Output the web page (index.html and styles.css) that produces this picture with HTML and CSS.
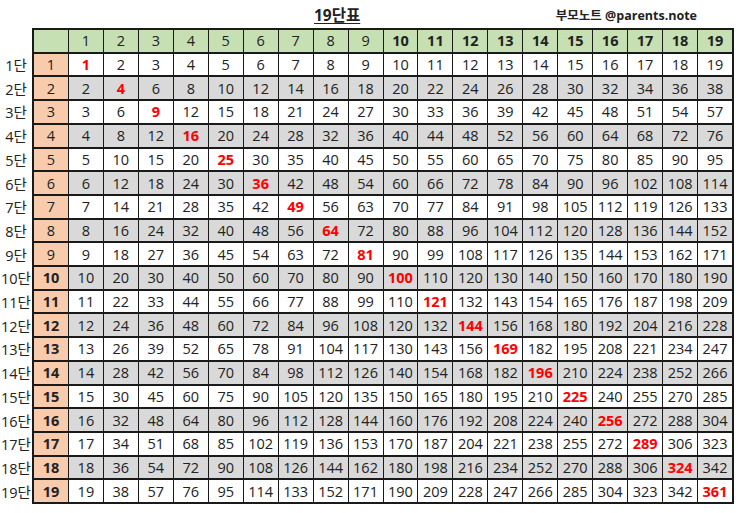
FILE: index.html
```html
<!DOCTYPE html>
<html lang="ko">
<head>
<meta charset="utf-8">
<title>19단표</title>
<link rel="stylesheet" href="styles.css">
</head>
<body>
<div class="top">
  <div class="title">19단표</div>
  <div class="credit">부모노트 @parents.note</div>
</div>
<div class="sheet">
  <div class="labels">
    <span></span>
    <span>1단</span><span>2단</span><span>3단</span><span>4단</span><span>5단</span><span>6단</span><span>7단</span><span>8단</span><span>9단</span><span>10단</span>
    <span>11단</span><span>12단</span><span>13단</span><span>14단</span><span>15단</span><span>16단</span><span>17단</span><span>18단</span><span>19단</span>
  </div>
  <div class="grid">
    <div class="r hd"><span></span><span>1</span><span>2</span><span>3</span><span>4</span><span>5</span><span>6</span><span>7</span><span>8</span><span>9</span><span class="b">10</span><span class="b">11</span><span class="b">12</span><span class="b">13</span><span class="b">14</span><span class="b">15</span><span class="b">16</span><span class="b">17</span><span class="b">18</span><span class="b">19</span></div>
    <div class="r"><span class="o">1</span><span class="d">1</span><span>2</span><span>3</span><span>4</span><span>5</span><span>6</span><span>7</span><span>8</span><span>9</span><span>10</span><span>11</span><span>12</span><span>13</span><span>14</span><span>15</span><span>16</span><span>17</span><span>18</span><span>19</span></div>
    <div class="r g"><span class="o">2</span><span>2</span><span class="d">4</span><span>6</span><span>8</span><span>10</span><span>12</span><span>14</span><span>16</span><span>18</span><span>20</span><span>22</span><span>24</span><span>26</span><span>28</span><span>30</span><span>32</span><span>34</span><span>36</span><span>38</span></div>
    <div class="r"><span class="o">3</span><span>3</span><span>6</span><span class="d">9</span><span>12</span><span>15</span><span>18</span><span>21</span><span>24</span><span>27</span><span>30</span><span>33</span><span>36</span><span>39</span><span>42</span><span>45</span><span>48</span><span>51</span><span>54</span><span>57</span></div>
    <div class="r g"><span class="o">4</span><span>4</span><span>8</span><span>12</span><span class="d">16</span><span>20</span><span>24</span><span>28</span><span>32</span><span>36</span><span>40</span><span>44</span><span>48</span><span>52</span><span>56</span><span>60</span><span>64</span><span>68</span><span>72</span><span>76</span></div>
    <div class="r"><span class="o">5</span><span>5</span><span>10</span><span>15</span><span>20</span><span class="d">25</span><span>30</span><span>35</span><span>40</span><span>45</span><span>50</span><span>55</span><span>60</span><span>65</span><span>70</span><span>75</span><span>80</span><span>85</span><span>90</span><span>95</span></div>
    <div class="r g"><span class="o">6</span><span>6</span><span>12</span><span>18</span><span>24</span><span>30</span><span class="d">36</span><span>42</span><span>48</span><span>54</span><span>60</span><span>66</span><span>72</span><span>78</span><span>84</span><span>90</span><span>96</span><span>102</span><span>108</span><span>114</span></div>
    <div class="r"><span class="o">7</span><span>7</span><span>14</span><span>21</span><span>28</span><span>35</span><span>42</span><span class="d">49</span><span>56</span><span>63</span><span>70</span><span>77</span><span>84</span><span>91</span><span>98</span><span>105</span><span>112</span><span>119</span><span>126</span><span>133</span></div>
    <div class="r g"><span class="o">8</span><span>8</span><span>16</span><span>24</span><span>32</span><span>40</span><span>48</span><span>56</span><span class="d">64</span><span>72</span><span>80</span><span>88</span><span>96</span><span>104</span><span>112</span><span>120</span><span>128</span><span>136</span><span>144</span><span>152</span></div>
    <div class="r"><span class="o">9</span><span>9</span><span>18</span><span>27</span><span>36</span><span>45</span><span>54</span><span>63</span><span>72</span><span class="d">81</span><span>90</span><span>99</span><span>108</span><span>117</span><span>126</span><span>135</span><span>144</span><span>153</span><span>162</span><span>171</span></div>
    <div class="r g"><span class="o b">10</span><span>10</span><span>20</span><span>30</span><span>40</span><span>50</span><span>60</span><span>70</span><span>80</span><span>90</span><span class="d">100</span><span>110</span><span>120</span><span>130</span><span>140</span><span>150</span><span>160</span><span>170</span><span>180</span><span>190</span></div>
    <div class="r"><span class="o b">11</span><span>11</span><span>22</span><span>33</span><span>44</span><span>55</span><span>66</span><span>77</span><span>88</span><span>99</span><span>110</span><span class="d">121</span><span>132</span><span>143</span><span>154</span><span>165</span><span>176</span><span>187</span><span>198</span><span>209</span></div>
    <div class="r g"><span class="o b">12</span><span>12</span><span>24</span><span>36</span><span>48</span><span>60</span><span>72</span><span>84</span><span>96</span><span>108</span><span>120</span><span>132</span><span class="d">144</span><span>156</span><span>168</span><span>180</span><span>192</span><span>204</span><span>216</span><span>228</span></div>
    <div class="r"><span class="o b">13</span><span>13</span><span>26</span><span>39</span><span>52</span><span>65</span><span>78</span><span>91</span><span>104</span><span>117</span><span>130</span><span>143</span><span>156</span><span class="d">169</span><span>182</span><span>195</span><span>208</span><span>221</span><span>234</span><span>247</span></div>
    <div class="r g"><span class="o b">14</span><span>14</span><span>28</span><span>42</span><span>56</span><span>70</span><span>84</span><span>98</span><span>112</span><span>126</span><span>140</span><span>154</span><span>168</span><span>182</span><span class="d">196</span><span>210</span><span>224</span><span>238</span><span>252</span><span>266</span></div>
    <div class="r"><span class="o b">15</span><span>15</span><span>30</span><span>45</span><span>60</span><span>75</span><span>90</span><span>105</span><span>120</span><span>135</span><span>150</span><span>165</span><span>180</span><span>195</span><span>210</span><span class="d">225</span><span>240</span><span>255</span><span>270</span><span>285</span></div>
    <div class="r g"><span class="o b">16</span><span>16</span><span>32</span><span>48</span><span>64</span><span>80</span><span>96</span><span>112</span><span>128</span><span>144</span><span>160</span><span>176</span><span>192</span><span>208</span><span>224</span><span>240</span><span class="d">256</span><span>272</span><span>288</span><span>304</span></div>
    <div class="r"><span class="o b">17</span><span>17</span><span>34</span><span>51</span><span>68</span><span>85</span><span>102</span><span>119</span><span>136</span><span>153</span><span>170</span><span>187</span><span>204</span><span>221</span><span>238</span><span>255</span><span>272</span><span class="d">289</span><span>306</span><span>323</span></div>
    <div class="r g"><span class="o b">18</span><span>18</span><span>36</span><span>54</span><span>72</span><span>90</span><span>108</span><span>126</span><span>144</span><span>162</span><span>180</span><span>198</span><span>216</span><span>234</span><span>252</span><span>270</span><span>288</span><span>306</span><span class="d">324</span><span>342</span></div>
    <div class="r"><span class="o b">19</span><span>19</span><span>38</span><span>57</span><span>76</span><span>95</span><span>114</span><span>133</span><span>152</span><span>171</span><span>190</span><span>209</span><span>228</span><span>247</span><span>266</span><span>285</span><span>304</span><span>323</span><span>342</span><span class="d">361</span></div>
  </div>
</div>
</body>
</html>
```

FILE: styles.css
```css
body {
  margin: 0;
  width: 743px;
  background: #fff;
  color: #222;
  font-family: "Open Sans", "Noto Sans CJK KR", sans-serif;
}

.top {
  height: 28px;
  display: flex;
  align-items: center;
}

.title {
  margin-left: 314px;
  font-size: 15.5px;
  font-weight: 700;
  text-decoration: underline;
  text-underline-offset: 2px;
}

.credit {
  margin-left: auto;
  margin-right: 46px;
  font-size: 12.5px;
  font-weight: 700;
}

.sheet {
  display: flex;
}

.labels {
  width: 32px;
  height: 476px;
  box-sizing: border-box;
  padding: 2px 0;
  display: grid;
  grid-template-rows: repeat(20, 1fr);
  row-gap: 2px;
}

.labels span {
  display: flex;
  align-items: center;
  justify-content: center;
  font-size: 14.5px;
  white-space: nowrap;
}

.grid {
  width: 702px;
  height: 476px;
  box-sizing: border-box;
  border: 2px solid #1a1a1a;
  background: #1a1a1a;
  display: grid;
  grid-template-columns: repeat(20, 1fr);
  grid-template-rows: repeat(20, 1fr);
  column-gap: 1px;
  row-gap: 2px;
}

.r {
  display: contents;
}

.grid span {
  background: #fff;
  display: flex;
  align-items: center;
  justify-content: center;
  font-size: 14.5px;
}

.r.g span {
  background: #d9d9d9;
}

.r.hd span {
  background: #c6e0b4;
}

.grid span.o {
  background: #f8cbad;
}

.b {
  font-weight: 700;
}

.d {
  color: #ff0000;
  font-weight: 700;
}
```
